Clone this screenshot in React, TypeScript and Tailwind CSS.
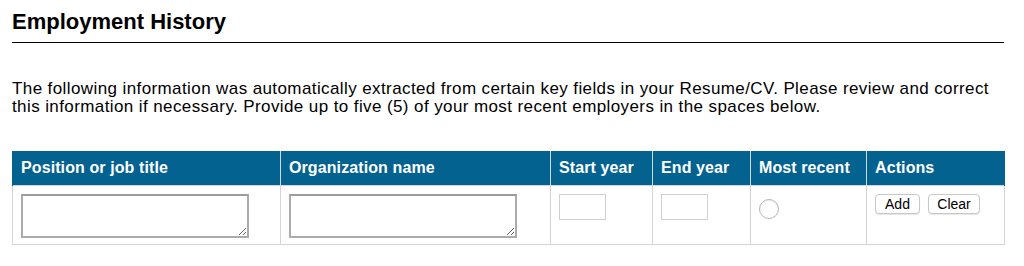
import React from "react"

const columns = [
  { label: "Position or job title", width: "w-[268px]" },
  { label: "Organization name", width: "w-[270px]" },
  { label: "Start year", width: "w-[102px]" },
  { label: "End year", width: "w-[98px]" },
  { label: "Most recent", width: "w-[116px]" },
  { label: "Actions", width: "w-[138px]" },
]

export default function App() {
  return (
    <div className="bg-white px-3 pt-[9px] font-['Liberation_Sans',Arial,sans-serif] text-black" style={{ width: 1024, height: 266 }}>
      <h2 className="w-[992px] border-b border-black pb-[7px] text-[22px] font-bold leading-[26px]">Employment History</h2>
      <p className="mt-[37px] w-[1000px] text-[17px] leading-[18px] tracking-[0.4px]">
        The following information was automatically extracted from certain key fields in your Resume/CV. Please review and correct
        <br />
        this information if necessary. Provide up to five (5) of your most recent employers in the spaces below.
      </p>
      <table className="mt-[35px] w-[992px] table-fixed border-collapse">
        <thead>
          <tr>
            {columns.map((c) => (
              <th
                key={c.label}
                className={`${c.width} h-[34px] border-x border-[#cfdbe4] bg-[#03628f] px-2 pt-[1px] text-left text-[16px] font-bold tracking-[0.1px] text-white first:border-l-[#03628f] last:border-r-[#03628f]`}
              >
                {c.label}
              </th>
            ))}
          </tr>
        </thead>
        <tbody>
          <tr className="h-[59px] align-top">
            <td className="border border-[#d4d4d4] px-2 pt-2">
              <textarea className="block h-[44px] w-[228px] resize border-2 border-[#ababab] border-t-[#9c9c9c] bg-white" />
            </td>
            <td className="border border-[#d4d4d4] px-2 pt-2">
              <textarea className="block h-[44px] w-[228px] resize border-2 border-[#ababab] border-t-[#9c9c9c] bg-white" />
            </td>
            <td className="border border-[#d4d4d4] px-2 pt-2">
              <input type="text" className="block h-[26px] w-[47px] border border-[#d0d0d0] bg-white" />
            </td>
            <td className="border border-[#d4d4d4] px-2 pt-2">
              <input type="text" className="block h-[26px] w-[47px] border border-[#d0d0d0] bg-white" />
            </td>
            <td className="border border-[#d4d4d4] px-2 pt-[13px]">
              <span className="block h-[20px] w-[20px] rounded-full border border-[#b5b5b5] bg-white shadow-[inset_0_1px_1px_rgba(0,0,0,0.08)]" />
            </td>
            <td className="border border-[#d4d4d4] px-2 pt-2">
              <div className="flex gap-2">
                <button className="h-[20px] w-[45px] rounded-[4px] border border-[#c8c8c8] bg-white text-[14px] leading-[18px] shadow-[0_1px_1px_rgba(0,0,0,0.1)]">
                  Add
                </button>
                <button className="h-[20px] w-[52px] rounded-[4px] border border-[#c8c8c8] bg-white text-[14px] leading-[18px] shadow-[0_1px_1px_rgba(0,0,0,0.1)]">
                  Clear
                </button>
              </div>
            </td>
          </tr>
        </tbody>
      </table>
    </div>
  )
}
